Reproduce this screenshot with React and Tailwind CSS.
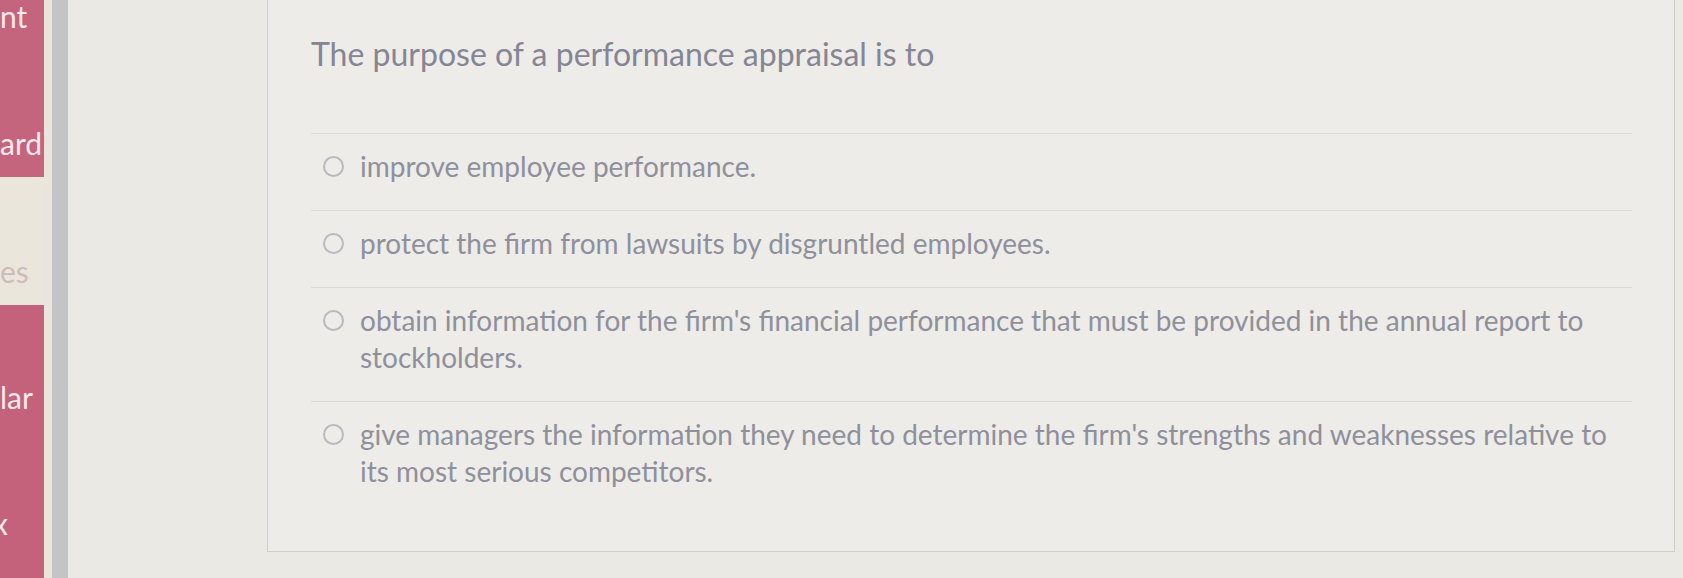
const OPTIONS = [
  "improve employee performance.",
  "protect the firm from lawsuits by disgruntled employees.",
  "obtain information for the firm's financial performance that must be provided in the annual report to stockholders.",
  "give managers the information they need to determine the firm's strengths and weaknesses relative to its most serious competitors.",
];

function Option({ text }) {
  return (
    <label className="flex items-start gap-[16px] border-t border-[#dad9d4] pt-[14px] pb-[25px] pl-[12px]">
      <span className="mt-[8px] w-[21px] h-[21px] shrink-0 rounded-full border-2 border-[#b9b9bf]" />
      <span className="text-[28px] leading-[37px] text-[#8f909c]">{text}</span>
    </label>
  );
}

export default function App() {
  return (
    <div
      className="flex h-[578px] w-full overflow-hidden bg-[#eae9e4]"
      style={{ fontFamily: "Lato, 'Noto Sans', sans-serif" }}
    >
      {/* Sidebar: the photo only shows the right-hand ends of the labels */}
      <nav className="w-[44px] shrink-0 flex flex-col overflow-hidden text-[30px] leading-[30px] whitespace-nowrap">
        <div className="h-[177px] shrink-0 flex flex-col items-start bg-[#c4647d] text-[#f6e9ec] pt-[1px]">
          <span>nt</span>
          <span className="mt-[97px]">ard</span>
        </div>
        <div className="h-[128px] shrink-0 flex flex-col items-start bg-[#ebe6dc] text-[#cfbcba] pt-[79px]">
          <span>es</span>
        </div>
        <div className="flex-1 flex flex-col items-start bg-[#c3627a] text-[#f6e9ec] pt-[77px]">
          <span>lar</span>
          <span className="mt-[96px] -ml-[7px]">x</span>
        </div>
      </nav>
      <div className="w-[8px] shrink-0 bg-[#e9e5dd]" />
      <div className="w-[16px] shrink-0 bg-[#c4c3c6]" />

      {/* Quiz question */}
      <main className="flex-1 pl-[199px] pr-[8px] pb-[26px]">
        <div className="h-full border-x border-b border-[#cfcecb] bg-[#edece8] pl-[43px] pr-[42px]">
          <p className="pt-[34px] text-[32px] leading-[40px] text-[#858594]">
            The purpose of a performance appraisal is to
          </p>
          <div className="mt-[59px]">
            {OPTIONS.map((o, i) => (
              <Option key={i} text={o} />
            ))}
          </div>
        </div>
      </main>
    </div>
  );
}
